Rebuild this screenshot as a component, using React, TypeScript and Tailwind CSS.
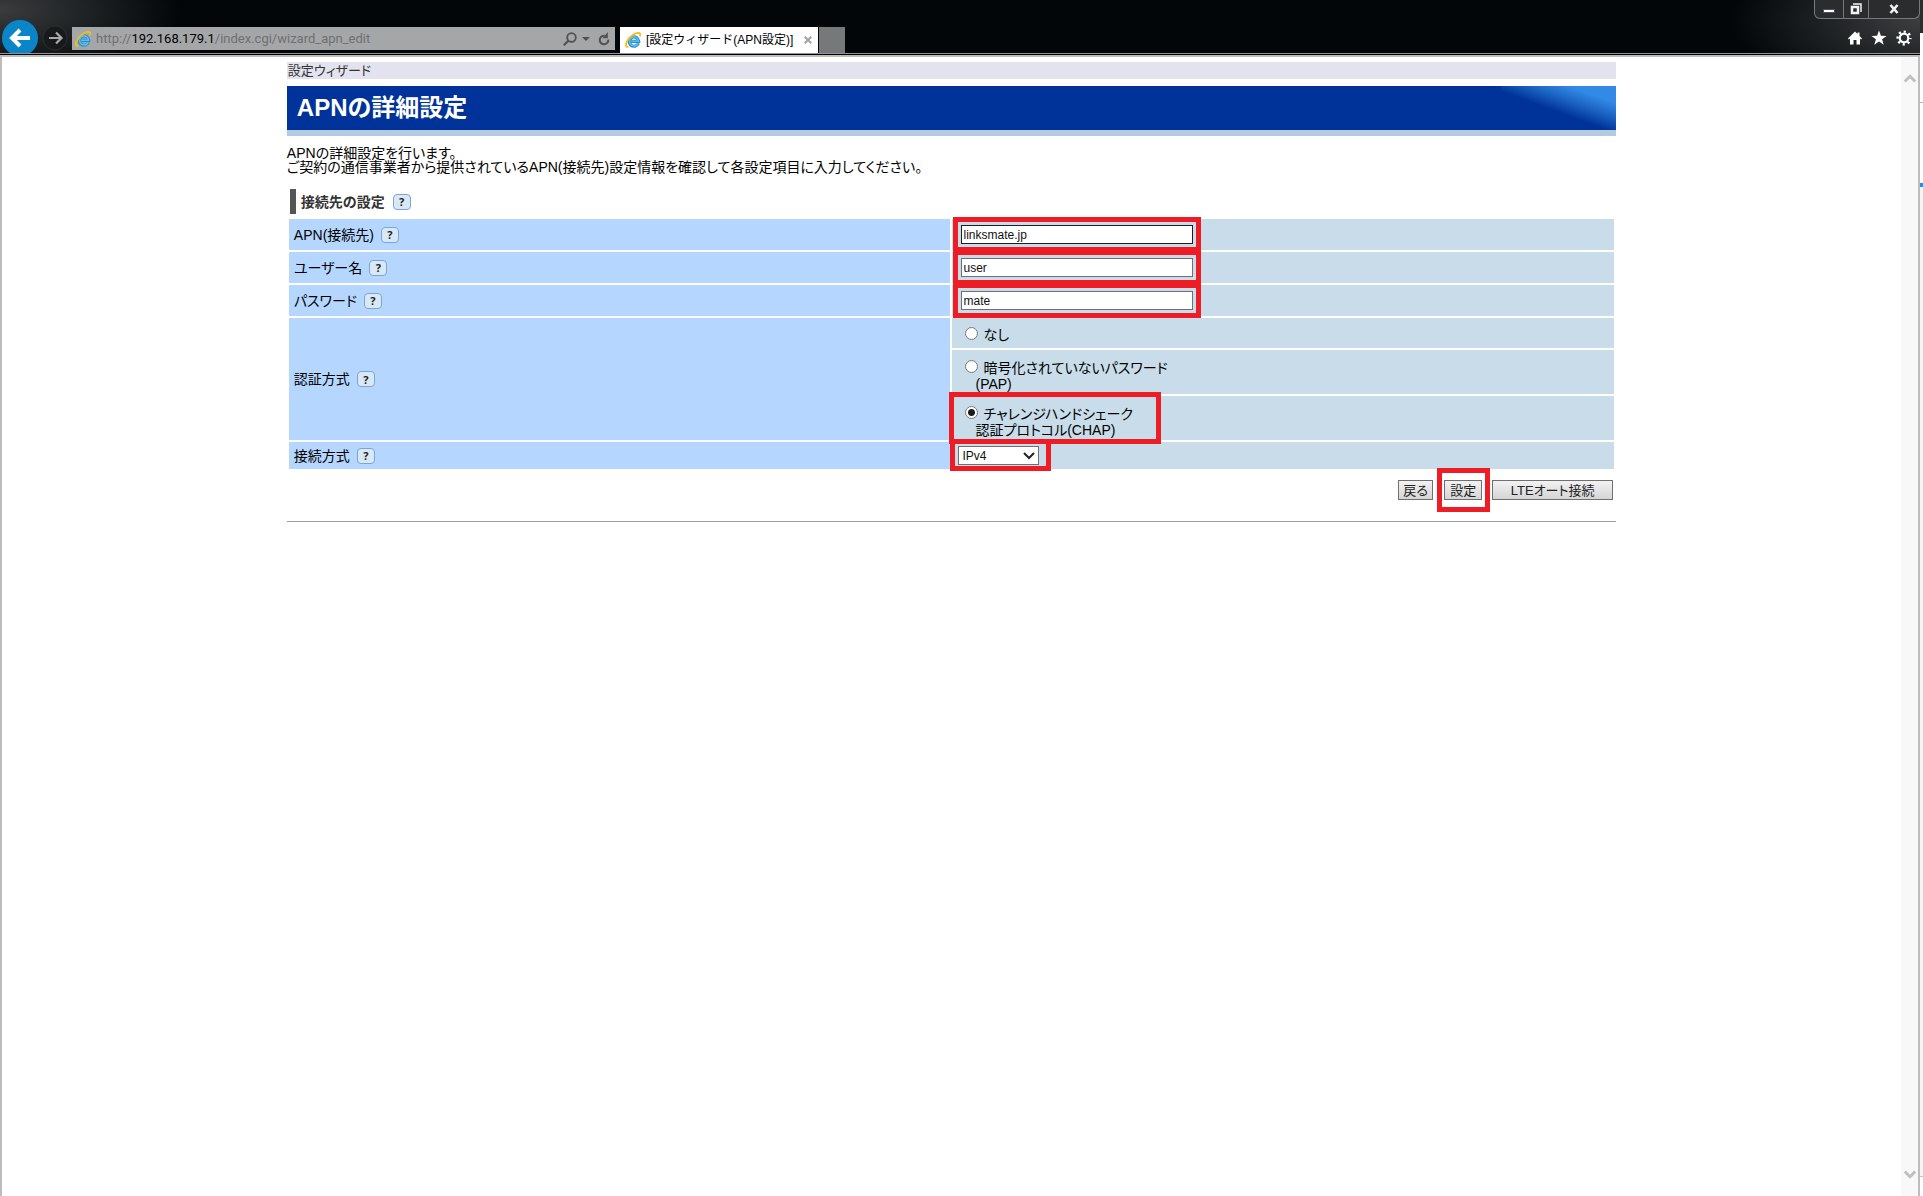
import { useState } from 'react'
import type { ReactNode } from 'react'

const authMethods = [
	{ id: 'none', lines: ['なし'], rowClass: 'h-[30px]', cellClass: 'pt-1' },
	{ id: 'pap', lines: ['暗号化されていないパスワード', '(PAP)'], rowClass: 'h-11', cellClass: 'pt-2' },
	{ id: 'chap', lines: ['チャレンジハンドシェーク', '認証プロトコル(CHAP)'], rowClass: 'h-11', cellClass: 'pt-2' },
]

const textFields = [
	{ id: 'apn', label: 'APN(接続先)', value: 'linksmate.jp', border: 'border-[#1e1e1e]' },
	{ id: 'user', label: 'ユーザー名', value: 'user', border: 'border-[#707070]' },
	{ id: 'password', label: 'パスワード', value: 'mate', border: 'border-[#707070]' },
]

function IeLogo() {
	return (
		<svg viewBox="0 0 16 16" className="h-4 w-4 shrink-0" fill="none" aria-hidden="true">
			<path
				d="M13.400 11.200A4.700 4.700 0 1 1 13.700 9.400H5.500"
				stroke="#2a8ccc"
				strokeWidth="3.200"
			/>
			<path
				d="M13.200 11.100A4.500 4.500 0 1 1 13.500 9.200H6"
				stroke="#5cbcec"
				strokeWidth="1.600"
			/>
			<path
				d="M3.400 14.600C.6 16 .2 12.600 2.200 8.800 4.600 4.200 10.800.4 14.200 1c1.200.4 1.300 1.800.6 3.400"
				stroke="#f4bd18"
				strokeWidth="1.800"
			/>
		</svg>
	)
}

function HelpButton({ label }: { label: string }) {
	return (
		<button
			type="button"
			aria-label={`${label}のヘルプ`}
			className="flex h-4 w-[18px] items-center justify-center rounded-[4px] border border-[#7aa5d6] bg-[#d9e8f5] font-['Noto_Sans',sans-serif] text-[11px] leading-none font-bold text-[#222]"
		>
			?
		</button>
	)
}

// Red frame laid over the control that has to be filled in
function Mark({ className }: { className: string }) {
	return (
		<span
			className={`pointer-events-none absolute z-10 border-5 border-[#ee1c24] ${className}`}
		/>
	)
}

function LabelCell({
	label,
	htmlFor,
	rowSpan,
}: {
	label: string
	htmlFor?: string
	rowSpan?: number
}) {
	return (
		<th scope="row" rowSpan={rowSpan} className="w-1/2 bg-[#b5d7ff] px-[5px] text-left font-normal">
			<div className="flex items-center gap-[7px]">
				{htmlFor ? <label htmlFor={htmlFor}>{label}</label> : <span>{label}</span>}
				<HelpButton label={label} />
			</div>
		</th>
	)
}

function PushButton({ className, children }: { className: string; children: ReactNode }) {
	return (
		<button
			type="button"
			className={`h-5 border border-[#707070] bg-linear-to-b from-[#f2f2f2] to-[#d5d5d5] text-[13px] leading-none text-[#222] ${className}`}
		>
			{children}
		</button>
	)
}

function BrowserBar() {
	return (
		<header className="flex h-[53px] items-end bg-[#020608] bg-[radial-gradient(ellipse_180px_70px_at_0_10px,#3a3c3e,transparent),radial-gradient(ellipse_190px_80px_at_100%_20px,#3c3e40,transparent)]">
			<button type="button" aria-label="戻る" className="ml-[2px] h-[34px] w-9 overflow-hidden">
				<svg viewBox="0 0 36 34" className="h-[34px] w-9">
					<circle cx="18" cy="19" r="18" fill="#0a86c8" />
					<path d="M28 19H10M18 11l-8 8 8 8" fill="none" stroke="#fff" strokeWidth="4" />
				</svg>
			</button>
			<button type="button" aria-label="進む" className="mb-[2px] ml-1 h-[26px] w-[26px]">
				<svg viewBox="0 0 26 26" className="h-[26px] w-[26px]">
					<circle cx="13" cy="13" r="12" fill="#17191b" stroke="#2c2e30" />
					<path d="M7 13h12M14 7.500l5.500 5.500-5.500 5.500" fill="none" stroke="#a6a8aa" strokeWidth="2.200" />
				</svg>
			</button>
			<div className="mb-[3px] ml-1 flex h-[23px] w-[543px] items-center bg-[#a5a6a8] pl-[3px] font-[Roboto,sans-serif] text-[13px] text-[#6f7072]">
				<IeLogo />
				<p className="ml-[5px] flex-1 leading-none">
					http://<span className="text-black">192.168.179.1</span>/index.cgi/wizard_apn_edit
				</p>
				<button type="button" aria-label="検索" className="flex items-center gap-[5px]">
					<svg viewBox="0 0 14 14" className="h-[14px] w-[14px]" fill="none" stroke="#505152">
						<circle cx="8.500" cy="5.500" r="4.300" strokeWidth="1.800" />
						<path d="M5.500 8.500.8 13.200" strokeWidth="2.200" />
					</svg>
					<svg viewBox="0 0 8 4" className="h-1 w-2" fill="#505152">
						<path d="M0 0h8L4 4z" />
					</svg>
				</button>
				<button type="button" aria-label="更新" className="mr-[5px] ml-2">
					<svg viewBox="0 0 12 14" className="h-[14px] w-3" fill="none">
						<path d="M10.300 7.600A4.300 4.300 0 1 1 6.500 3.700" stroke="#505152" strokeWidth="2" />
						<path d="M9.800 0v6.200H4.600z" fill="#505152" />
					</svg>
				</button>
			</div>
			<div className="ml-[5px] flex h-[26px] w-[198px] items-center bg-white pl-[5px] text-xs text-black">
				<IeLogo />
				<span className="ml-[5px] flex-1 whitespace-nowrap">[設定ウィザード(APN設定)]</span>
				<button type="button" aria-label="タブを閉じる" className="mr-[6px]">
					<svg viewBox="0 0 8 8" className="h-2 w-2" stroke="#a3a3a3" strokeWidth="2">
						<path d="M.7.7l6.600 6.600M7.300.7.7 7.300" />
					</svg>
				</button>
			</div>
			<button type="button" aria-label="新しいタブ" className="ml-px h-[26px] w-[26px] bg-[#77787a]" />
			<div className="ml-auto flex w-[106px] flex-col justify-between self-stretch">
				<div className="flex h-[19px] rounded-b-md border border-t-0 border-[#77797b] bg-[#2a2c2e]">
					<button type="button" aria-label="最小化" className="flex w-7 items-center justify-center">
						<svg viewBox="0 0 12 4" className="mt-1 h-1 w-3">
							<path d="M.5.5h11v3H.5z" fill="#fff" stroke="#4b4c60" />
						</svg>
					</button>
					<button
						type="button"
						aria-label="元に戻す"
						className="flex w-[26px] items-center justify-center border-x border-[#77797b]"
					>
						<svg viewBox="0 0 12 12" className="h-3 w-3" fill="none" stroke="#f2f2f7">
							<path d="M3 1h8v8" strokeWidth="1.500" />
							<path d="M2 4h6v6H2z" strokeWidth="2.500" />
						</svg>
					</button>
					<button type="button" aria-label="閉じる" className="flex flex-1 items-center justify-center">
						<svg viewBox="0 0 10 10" className="h-[10px] w-[10px]" stroke="#f2f2f7" strokeWidth="2.600">
							<path d="M1.500 1l7 8M8.500 1l-7 8" />
						</svg>
					</button>
				</div>
				<div className="mb-[7px] flex items-center justify-end gap-[9px] pr-2">
					<button type="button" aria-label="ホーム">
						<svg viewBox="0 0 14 14" className="h-[14px] w-[14px]" fill="#fff">
							<path d="M7 .5l2.500 2.500V1.500h2V5L14 7.500l-.8 1L12 7.500V13.500H8.500V9h-3v4.500H2V7.500l-1.200 1-.8-1z" />
						</svg>
					</button>
					<button type="button" aria-label="お気に入り">
						<svg viewBox="0 0 16 16" className="h-4 w-4" fill="#fff">
							<path d="M8 .5l1.900 5.300 5.600.1-4.400 3.400 1.600 5.500L8 11.500l-4.700 3.300 1.600-5.500L.5 5.900l5.600-.1z" />
						</svg>
					</button>
					<button type="button" aria-label="ツール">
						<svg viewBox="0 0 16 16" className="h-4 w-4" fill="none" stroke="#fff">
							<circle cx="8" cy="8" r="4.300" strokeWidth="2.200" />
							<circle cx="8" cy="8" r="6.400" strokeWidth="2.400" strokeDasharray="2.200 2.826" strokeDashoffset="1.100" />
						</svg>
					</button>
				</div>
			</div>
		</header>
	)
}

function ScrollBar() {
	return (
		<div className="flex w-[17px] shrink-0 flex-col items-center justify-between bg-[#f8f8f8] py-[17px]">
			<svg viewBox="0 0 12 9" className="h-[9px] w-3" fill="none" stroke="#bfbfbf" strokeWidth="3">
				<path d="M.8 7.500 6 2.300l5.200 5.200" />
			</svg>
			<svg viewBox="0 0 12 9" className="h-[9px] w-3" fill="none" stroke="#bfbfbf" strokeWidth="3">
				<path d="M.8 1.500 6 6.700l5.200-5.200" />
			</svg>
		</div>
	)
}

function SettingsForm() {
	const [values, setValues] = useState<Record<string, string>>(() =>
		Object.fromEntries(textFields.map((f) => [f.id, f.value]))
	)
	const [auth, setAuth] = useState('chap')
	const [ipMode, setIpMode] = useState('IPv4')

	return (
		<form onSubmit={(e) => e.preventDefault()}>
			<table className="w-full table-fixed border-separate border-spacing-[2px]">
				<tbody>
					{textFields.map((field) => (
						<tr key={field.id} className="h-[31px]">
							<LabelCell label={field.label} htmlFor={field.id} />
							<td className="bg-[#c8dde9] px-[9px]">
								<div className="relative h-[19px] w-[232px]">
									<input
										id={field.id}
										type="text"
										value={values[field.id]}
										onChange={(e) => setValues({ ...values, [field.id]: e.target.value })}
										className={`block h-[19px] w-full border bg-white px-px text-xs text-[#111] outline-none ${field.border}`}
									/>
									<Mark className="-inset-2" />
								</div>
							</td>
						</tr>
					))}
					{authMethods.map((method, i) => (
						<tr key={method.id} className={method.rowClass}>
							{i === 0 && <LabelCell label="認証方式" rowSpan={3} />}
							<td className={`relative bg-[#c8dde9] pl-[23px] ${method.cellClass}`}>
								<label className="block -indent-[10px] leading-4">
									<input
										type="radio"
										name="auth"
										checked={auth === method.id}
										onChange={() => setAuth(method.id)}
										className="-my-1 mr-[5px] h-[13px] w-[13px] appearance-none rounded-full border border-[#7a7a7a] bg-white align-[4px] checked:bg-[radial-gradient(circle,#1c1c1c_3px,#fff_4px)]"
									/>
									{method.lines[0]}
									{method.lines[1] && <span className="block indent-0">{method.lines[1]}</span>}
								</label>
								{method.id === 'chap' && <Mark className="-top-1 -left-[3px] h-[52px] w-[212px]" />}
							</td>
						</tr>
					))}
					<tr className="h-[27px]">
						<LabelCell label="接続方式" htmlFor="ip-mode" />
						<td className="bg-[#c8dde9] px-[6px]">
							<div className="relative h-[19px] w-[81px]">
								<select
									id="ip-mode"
									value={ipMode}
									onChange={(e) => setIpMode(e.target.value)}
									className="block h-[19px] w-full appearance-none border border-[#707070] bg-white pl-[3px] text-xs leading-none text-[#111]"
								>
									<option>IPv4</option>
									<option>IPv6</option>
									<option>IPv4/IPv6</option>
								</select>
								<svg
									viewBox="0 0 12 8"
									className="pointer-events-none absolute top-[6px] right-1 h-2 w-3"
									fill="none"
									stroke="#1f2328"
									strokeWidth="2"
								>
									<path d="M1 1l5 5 5-5" />
								</svg>
								<Mark className="-top-[7px] -right-3 -bottom-[6px] -left-2" />
							</div>
						</td>
					</tr>
				</tbody>
			</table>
			<div className="mt-[9px] flex justify-end pr-[3px]">
				<PushButton className="w-[35px]">戻る</PushButton>
				<div className="relative mr-[10px] ml-[11px]">
					<PushButton className="block w-[38px]">設定</PushButton>
					<Mark className="-inset-y-3 -right-2 -left-[7px]" />
				</div>
				<PushButton className="w-[121px]">LTEオート接続</PushButton>
			</div>
		</form>
	)
}

export default function App() {
	return (
		<div className="flex min-h-screen bg-[#2a2c2e] font-['Liberation_Sans','Noto_Sans_CJK_JP',sans-serif]">
			<div className="flex min-w-0 flex-1 flex-col">
				<BrowserBar />
				<div className="h-[2px] border-t border-[#959293] bg-black" />
				<div className="flex flex-1 border-2 border-b-0 border-[#bdbdbd] bg-white">
					<main className="min-w-0 flex-1">
						<div className="mx-auto w-[70%] pt-[5px] text-sm text-black [font-feature-settings:'palt']">
							<nav className="h-[17px] bg-[#e3e3f0] pl-px text-[13px] leading-[17px] text-[#333]">
								設定ウィザード
							</nav>
							<div className="mt-[7px] flex h-[50px] items-center border-b-6 border-[#b5cadf] bg-[#003399] bg-[linear-gradient(20deg,#003399_45%,#1c66c4_64%,#328ae6_80%)] bg-[size:115px_44px] bg-[position:right_top] bg-no-repeat pl-[10px]">
								<h1 className="text-2xl leading-none font-bold text-white">APNの詳細設定</h1>
							</div>
							<p className="mt-[10px] leading-[14px]">
								APNの詳細設定を行います。
								<br />
								ご契約の通信事業者から提供されているAPN(接続先)設定情報を確認して各設定項目に入力してください。
							</p>
							<div className="mt-[15px] ml-[3px] flex h-[25px] items-center gap-2 border-l-6 border-[#555] pl-[5px]">
								<h2 className="font-bold text-[#333]">接続先の設定</h2>
								<HelpButton label="接続先の設定" />
							</div>
							<div className="mt-[3px]">
								<SettingsForm />
							</div>
							<hr className="mt-[21px] border-[#a0a0a0]" />
						</div>
					</main>
					<ScrollBar />
				</div>
			</div>
			{/* edge of the window behind */}
			<div className="flex w-[3px] flex-col pt-[33px]">
				<div className="h-[69px] bg-white" />
				<div className="h-[81px] border-t border-[#b5b5b5] bg-white" />
				<div className="h-1 bg-[#0a95ff]" />
				<div className="flex-1 bg-[#f5f5f5]" />
				<div className="h-5 border-t border-[#c4c4c4] bg-white" />
			</div>
		</div>
	)
}
